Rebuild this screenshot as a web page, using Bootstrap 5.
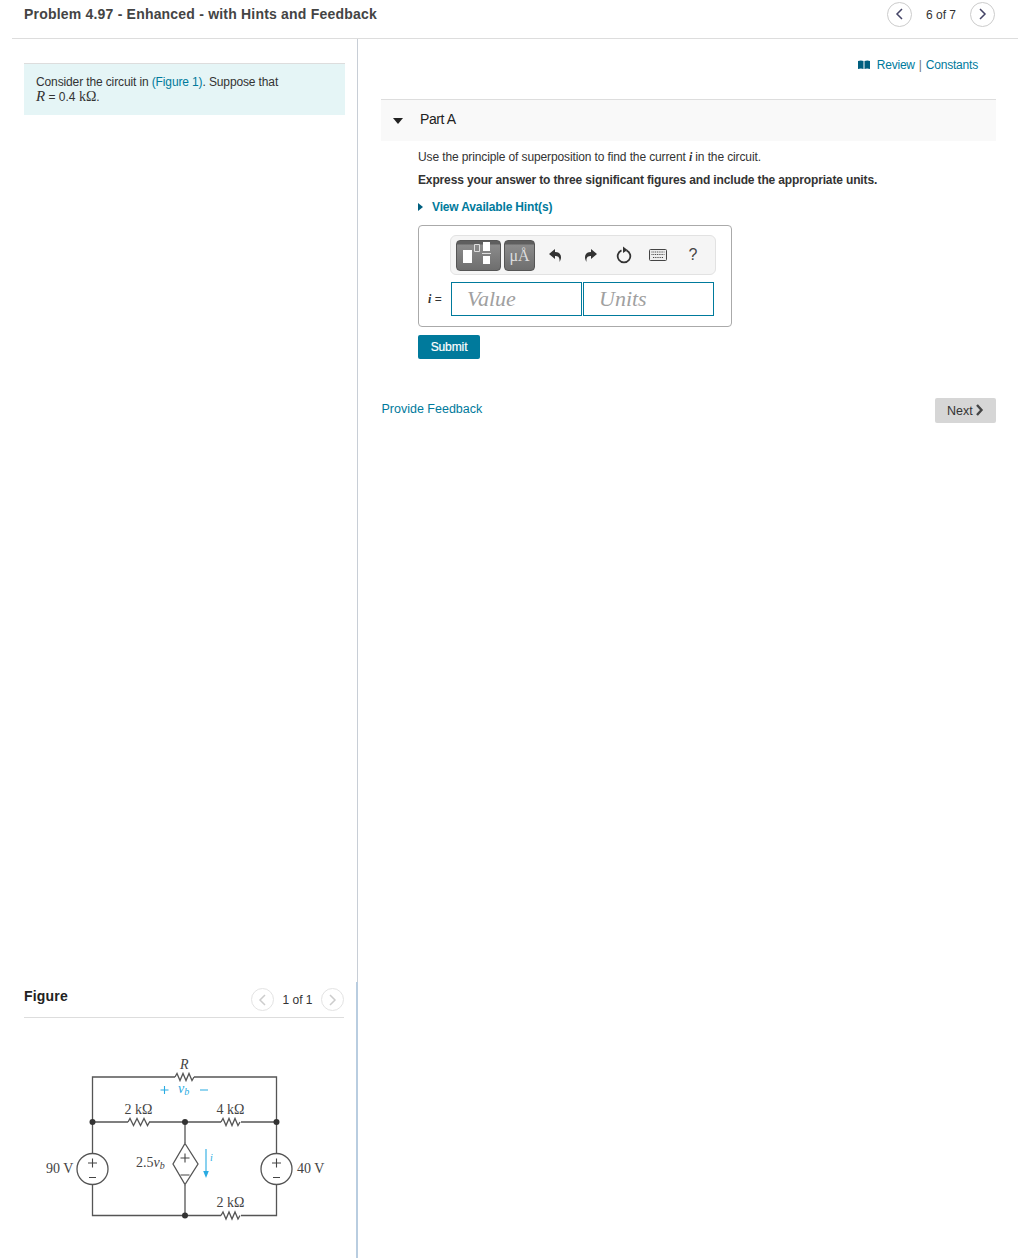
<!DOCTYPE html>
<html lang="en">
<head>
<meta charset="utf-8">
<title>Problem 4.97</title>
<link href="https://cdn.jsdelivr.net/npm/bootstrap@5.3.0/dist/css/bootstrap.min.css" rel="stylesheet">
<style>
html,body{margin:0;height:1258px;overflow:hidden;background:#fff;}
body{font-family:"Liberation Sans",Arial,sans-serif;font-size:12px;line-height:14px;color:#333;}
a{text-decoration:none;color:#007a9c;}
.top-head{height:39px;margin:0 2px 0 12px;padding:0 23px 0 12px;border-bottom:1px solid #ddd;}
.top-title{font-size:14px;font-weight:700;color:#444;letter-spacing:.2px;margin-top:-10px;}
.circ-btn{width:25px;height:25px;border:1px solid #ccc;border-radius:50%;background:#fff;padding:0;}
.circ-btn svg{display:block;margin:auto;}
.pager-txt{font-size:12px;color:#333;}
.pager-main{margin-top:-10px;}
.pager-main .pager-txt{width:58px;text-align:center;padding-top:2px;}
.split{height:1219px;}
.left-pane{width:346px;margin-left:12px;height:1219px;padding:24px 12px 0;border-right:1px solid #c8ced6;position:relative;}
.left-pane::after{content:"";position:absolute;right:-1px;top:943px;bottom:0;width:2px;background:#b9cde0;}
.prompt-box{background:#e5f5f6;border-top:1px solid #ddd;height:52px;padding:11px 12px 0;width:321px;}
.prompt-first{letter-spacing:-.125px;}
.math-i{font-family:"Liberation Serif",serif;font-style:italic;font-weight:700;}
.math-r{font-family:"Liberation Serif",serif;font-size:14px;}
.math-v{font-family:"Liberation Serif",serif;font-style:italic;font-size:15px;}
.fig-head{height:34px;margin-top:869px;width:320px;border-bottom:1px solid #ddd;}
.fig-title{font-size:14px;font-weight:700;color:#222;letter-spacing:.2px;margin-top:-10px;}
.fig-btn{width:23px;height:23px;border:1px solid #e3e3e3;border-radius:50%;background:#fff;padding:0;}
.fig-btn svg{display:block;margin:auto;}
.fig-pager .pager-txt{width:47px;text-align:center;margin-top:5px;}
.fig-pager{margin-top:4px;}
.circuit{display:block;width:345px;height:218px;margin:22px 0 0 -12px;}
.right-pane{width:615px;margin-left:23px;}
.review-line{height:60px;padding:19px 18px 0 0;letter-spacing:-.2px;}
.book-icon{margin:2px 7px 0 0;}
.part-bar{height:42px;background:#f9f9f9;border-top:1px solid #ddd;padding:0 12px 4px;font-size:14px;color:#222;letter-spacing:-.4px;}
.part-arrow{width:0;height:0;border-left:5px solid transparent;border-right:5px solid transparent;border-top:6px solid #222;margin:4px 17px 0 0;}
.part-body{padding:9px 0 0 37px;}
.q-line{height:14px;margin-bottom:9px;letter-spacing:-.12px;}
.q-strong{font-weight:700;color:#333;letter-spacing:-.14px;margin-bottom:13px;}
.hint-line{font-weight:700;letter-spacing:-.15px;margin:0 0 11px;height:14px;}
.hint-arrow{width:0;height:0;border-top:4.5px solid transparent;border-bottom:4.5px solid transparent;border-left:5px solid #005f7f;margin-right:9px;}
.answer-box{width:314px;height:102px;border:1px solid #aaa;border-radius:4px;padding:9px 0 0 8px;}
.tool-bar{width:266px;height:40px;margin-left:23px;background:#f5f5f5;border:1px solid #e2e2e2;border-radius:6px;padding:4px 5px;}
.tmpl-btn{height:31px;border-radius:4px;border:1px solid #555;background:linear-gradient(#5e5e5e 0,#5e5e5e 3px,#8b8b8b 4px,#6e6e6e 100%);flex:none;}
.tmpl-a{width:45px;margin-right:3px;}
.tmpl-a svg{display:block;}
.tmpl-b{width:31px;color:#ddd;font-family:"Liberation Serif",serif;font-size:16px;text-align:center;padding-top:7px;line-height:16px;}
.tool-icon{width:34px;text-align:center;}
.tool-icon svg{display:block;margin:auto;}
.tool-q{font-size:16px;color:#444;padding-left:2px;}
.ans-row{margin-top:7px;height:34px;}
.ans-lab{width:24px;font-size:12px;color:#333;padding-left:1px;white-space:nowrap;}
.ans-input{width:131px;height:34px;border:1px solid #007a9c;margin-right:1px;padding:0 15px;font-family:"Liberation Serif",serif;font-style:italic;font-size:22px;line-height:32px;color:#a0a0a0;}
.submit-btn{background:#007a9c;border:0;border-radius:2px;color:#fff;font-size:12px;height:24px;width:62px;padding:0;margin-top:8px;letter-spacing:-.1px;display:block;-webkit-text-stroke:.2px #fff;}
.foot-row{margin-top:39px;}
.feedback-link{font-size:12.5px;padding:0 0 3px .5px;}
.next-btn{background:#d6d6d6;border:0;border-radius:2px;color:#333;font-size:12.5px;width:61px;height:25px;padding:0;}
.next-btn svg{margin-left:-1px;vertical-align:-1px;}
</style>
</head>
<body>
<header class="top-head d-flex align-items-center justify-content-between">
  <div class="top-title">Problem 4.97 - Enhanced - with Hints and Feedback</div>
  <div class="d-flex align-items-center pager-main">
    <button class="circ-btn" aria-label="Previous"><svg width="9" height="12" viewBox="0 0 9 12"><path d="M7 1 2 6l5 5" fill="none" stroke="#446" stroke-width="1.5"/></svg></button>
    <span class="pager-txt">6 of 7</span>
    <button class="circ-btn" aria-label="Next"><svg width="9" height="12" viewBox="0 0 9 12"><path d="M2 1l5 5-5 5" fill="none" stroke="#446" stroke-width="1.5"/></svg></button>
  </div>
</header>
<div class="d-flex split">
  <aside class="left-pane">
    <div class="prompt-box"><span class="prompt-first">Consider the circuit in <a href="#">(Figure 1)</a>. Suppose that</span><br><span class="math-v">R</span> = 0.4 <span class="math-r">kΩ</span>.</div>
    <div class="fig-head d-flex justify-content-between">
      <div class="fig-title align-self-center">Figure</div>
      <div class="d-flex align-items-start fig-pager">
        <button class="fig-btn" aria-label="Previous"><svg width="9" height="12" viewBox="0 0 9 12"><path d="M7 1 2 6l5 5" fill="none" stroke="#ccc" stroke-width="1.5"/></svg></button>
        <span class="pager-txt">1 of 1</span>
        <button class="fig-btn" aria-label="Next"><svg width="9" height="12" viewBox="0 0 9 12"><path d="M2 1l5 5-5 5" fill="none" stroke="#ccc" stroke-width="1.5"/></svg></button>
      </div>
    </div>
    <svg class="circuit" viewBox="12 1040 345 218" role="img" aria-label="Circuit diagram">
      <g fill="none" stroke="#555" stroke-width="1.3">
        <path d="M92.5 1153V1077H175M194 1077H276.5V1153M276.5 1185V1215.5H241M221 1215.5H92.500V1185M92.500 1122H128M149 1122H221M241 1122H276.500M185 1122V1143M185 1185V1215.500"/>
        <path d="M175 1077l2-3.500 3 7 3-7 3 7 3-7 3 7 2-3.500M128 1122l2-3.500 3.500 7 3.500-7 3.500 7 3.500-7 3.500 7 2-3.500M221 1122l2-3.500 3 7 3-7 3 7 3-7 3 7 2-3.500M221 1215.500l2-3.500 3 7 3-7 3 7 3-7 3 7 2-3.500"/>
        <circle cx="92.500" cy="1169" r="15.500"/>
        <circle cx="276.500" cy="1169" r="15.500"/>
        <path d="M185 1143.500 198 1164 185 1184.500 173 1164Z"/>
      </g>
      <g fill="#333">
        <circle cx="92.500" cy="1122" r="3"/><circle cx="185" cy="1122" r="3"/><circle cx="276.500" cy="1122" r="3"/><circle cx="185" cy="1215.500" r="3"/>
      </g>
      <g fill="none" stroke="#444" stroke-width="1.100">
        <path d="M88 1163H97M92.500 1158.500V1167.500M89 1177.500H96"/>
        <path d="M272 1163H281M276.500 1158.500V1167.500M273 1177.500H280"/>
        <path d="M180.500 1158H189.500M185 1153.500V1162.500"/>
        <path d="M180.500 1175H189.500" stroke="#555"/>
      </g>
      <g fill="none" stroke="#29abe2" stroke-width="1.100">
        <path d="M160.500 1090H168.500M164.500 1086V1094M200 1090H208"/>
        <path d="M206 1149V1172"/>
      </g>
      <path d="M203.200 1171 206 1178 208.800 1171Z" fill="#29abe2"/>
      <g font-family="'Liberation Serif',serif" font-size="14" fill="#444">
        <text x="180" y="1068.500" font-style="italic">R</text>
        <text x="124.500" y="1113.500">2 kΩ</text>
        <text x="216.500" y="1113.500">4 kΩ</text>
        <text x="216.500" y="1206.500">2 kΩ</text>
        <text x="46" y="1172.500">90 V</text>
        <text x="297" y="1172.500">40 V</text>
        <text x="136" y="1166.500">2.5<tspan font-style="italic">v</tspan><tspan font-style="italic" font-size="10" dy="2">b</tspan></text>
        <text x="178" y="1093" fill="#29abe2" font-style="italic">v<tspan font-size="10" dy="2">b</tspan></text>
        <text x="210" y="1161" fill="#29abe2" font-style="italic" font-size="10">i</text>
      </g>
    </svg>
  </aside>
  <main class="right-pane">
    <div class="review-line d-flex justify-content-end align-items-start">
      <svg class="book-icon" width="12" height="10" viewBox="0 0 12 10"><path d="M0 1q3-1 5.500 0v8Q3 8 0 9zM6.500 1q3-1 5.500 0v8q-3-1-5.500 0z" fill="#005f7f"/></svg>
      <a href="#">Review</a><span class="px-1 text-secondary">|</span><a href="#">Constants</a>
    </div>
    <div class="part-bar d-flex align-items-center"><span class="part-arrow"></span>Part A</div>
    <div class="part-body">
      <div class="q-line">Use the principle of superposition to find the current <span class="math-i">i</span> in the circuit.</div>
      <div class="q-line q-strong">Express your answer to three significant figures and include the appropriate units.</div>
      <div class="hint-line d-flex align-items-center"><span class="hint-arrow"></span><a href="#">View Available Hint(s)</a></div>
      <div class="answer-box">
        <div class="tool-bar d-flex align-items-center">
          <div class="tmpl-btn tmpl-a">
            <svg width="43" height="29" viewBox="0 0 43 29"><path d="M6 9h9v13H6zM26 1h7v9h-7zM26 15h7v8h-7z" fill="#fff"/><path d="M17.500 3.500h5v7h-5z" fill="none" stroke="#ddd"/><path d="M25 12.500h9" stroke="#ddd"/></svg>
          </div>
          <div class="tmpl-btn tmpl-b">μÅ</div>
          <div class="tool-icon ms-1"><svg width="14" height="15" viewBox="0 0 14 15"><path d="M6 1 0 6l6 5V8c3 0 5 1 4.500 6C13.500 9 12 4 6 4Z" fill="#333"/></svg></div>
          <div class="tool-icon"><svg width="14" height="15" viewBox="0 0 14 15"><path d="M8 1l6 5-6 5V8c-3 0-5 1-4.500 6C.500 9 2 4 8 4Z" fill="#333"/></svg></div>
          <div class="tool-icon"><svg width="16" height="18" viewBox="0 0 16 18"><path d="M5.500 4.300a6.300 6.300 0 1 0 5 0" fill="none" stroke="#333" stroke-width="1.800"/><path d="M7 .500V7L11.500 4Z" fill="#333"/></svg></div>
          <div class="tool-icon"><svg width="18" height="12" viewBox="0 0 18 12"><rect x=".5" y=".5" width="17" height="11" rx="1" fill="#eee" stroke="#444"/><path d="M2.500 3h13M2.500 5.500h13M4 8.500h10" stroke="#444" stroke-width="1.200" stroke-dasharray="1 .8"/></svg></div>
          <div class="tool-icon tool-q">?</div>
        </div>
        <div class="ans-row d-flex align-items-center">
          <div class="ans-lab"><span class="math-i">i</span> =</div>
          <div class="ans-input">Value</div>
          <div class="ans-input">Units</div>
        </div>
      </div>
      <button class="submit-btn">Submit</button>
    </div>
    <div class="foot-row d-flex justify-content-between align-items-center">
      <a class="feedback-link" href="#">Provide Feedback</a>
      <button class="next-btn">Next <svg width="9" height="12" viewBox="0 0 9 12"><path d="M2 1l4.500 5L2 11" fill="none" stroke="#444" stroke-width="2.400"/></svg></button>
    </div>
  </main>
</div>
<script src="https://cdn.jsdelivr.net/npm/bootstrap@5.3.0/dist/js/bootstrap.bundle.min.js"></script>
</body>
</html>
